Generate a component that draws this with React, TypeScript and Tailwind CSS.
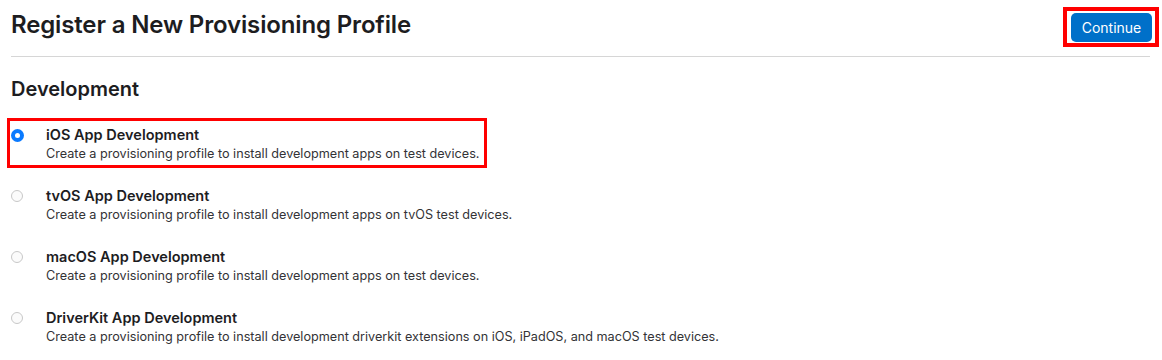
import React from 'react';

const options = [
  {
    title: 'iOS App Development',
    desc: 'Create a provisioning profile to install development apps on test devices.',
    selected: true,
  },
  {
    title: 'tvOS App Development',
    desc: 'Create a provisioning profile to install development apps on tvOS test devices.',
    selected: false,
  },
  {
    title: 'macOS App Development',
    desc: 'Create a provisioning profile to install development apps on test devices.',
    selected: false,
  },
  {
    title: 'DriverKit App Development',
    desc: 'Create a provisioning profile to install development driverkit extensions on iOS, iPadOS, and macOS test devices.',
    selected: false,
  },
];

const Radio: React.FC<{ checked: boolean }> = ({ checked }) =>
  checked ? (
    <span className="w-[13px] h-[13px] rounded-full bg-[#0a7aff] flex items-center justify-center">
      <span className="w-[5px] h-[5px] rounded-full bg-white" />
    </span>
  ) : (
    <span className="w-[12px] h-[12px] rounded-full border border-[#c8c8c8] bg-[#fbfbfb]" />
  );

export default function App() {
  return (
    <div className="w-[1162px] h-[360px] bg-white overflow-hidden font-['Inter',sans-serif] text-[#1d1d1f]">
      {/* Header */}
      <div className="flex items-start justify-between pl-[11px] pr-[3px] pt-[7px]">
        <h1 className="text-[24px] leading-[30px] font-semibold tracking-[-0.15px] mt-[3px]">
          Register a New Provisioning Profile
        </h1>
        <div className="border-4 border-[#ff0000] pl-[4px] pr-[3px] pt-[2px] pb-[1px]">
          <button className="h-[29px] w-[81px] rounded-[5px] bg-[#0070c9] text-white text-[14px] leading-[29px]">
            Continue
          </button>
        </div>
      </div>

      <div className="ml-[11px] mr-[12px] mt-[9px] border-t border-[#d6d6d6]" />

      {/* Section */}
      <h2 className="pl-[11px] mt-[19px] text-[20px] leading-[26px] font-semibold">Development</h2>

      <div className="mt-[16px] flex flex-col items-start gap-[11px]">
        {options.map((o) => (
          <div
            key={o.title}
            className={`flex ml-[7px] border-[3px] ${o.selected ? 'border-[#ff0000]' : 'border-transparent'} pt-[4px] pb-[3px] pr-[5px]`}
          >
            <div className="w-[36px] shrink-0 pl-[1px] pt-[4px] flex justify-start">
              <Radio checked={o.selected} />
            </div>
            <div className="whitespace-nowrap">
              <div className="text-[14.5px] leading-[20px] font-semibold">{o.title}</div>
              <div className="text-[12.65px] leading-[17px] text-[#333336]">{o.desc}</div>
            </div>
          </div>
        ))}
      </div>
    </div>
  );
}
